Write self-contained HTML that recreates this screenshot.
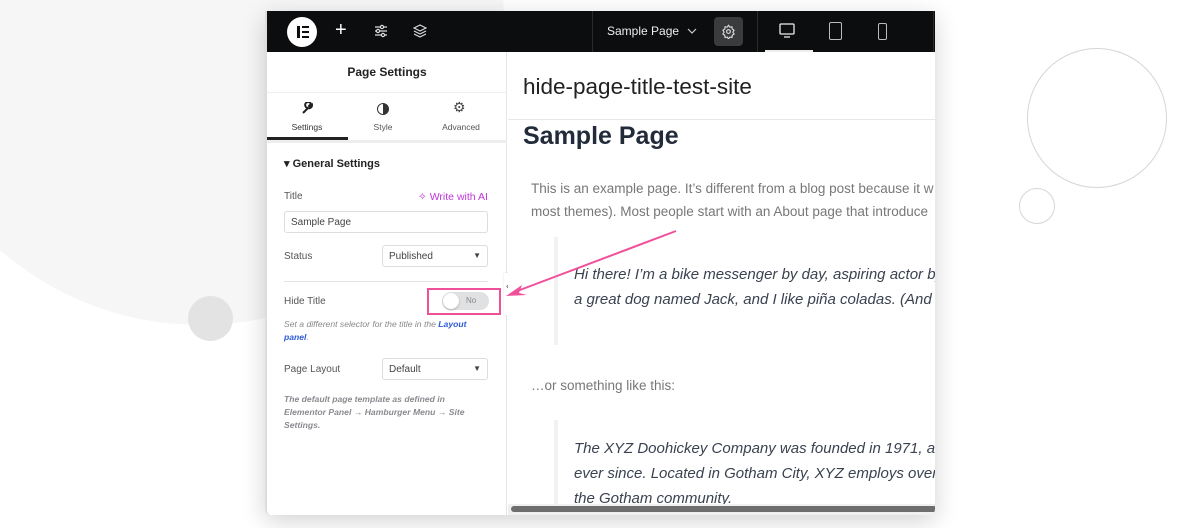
<!DOCTYPE html>
<html><head><meta charset="utf-8"><style>
*{box-sizing:border-box;margin:0;padding:0}
body{width:1200px;height:528px;overflow:hidden;background:#fff;font-family:"Liberation Sans",sans-serif;position:relative}
.abs{position:absolute}
.win{left:265px;top:11px;width:670px;height:504px;background:#fff;border-radius:0 0 6px 6px;overflow:hidden;box-shadow:0 6px 24px rgba(0,0,0,.18);border-left:2px solid #ddd}
.top{left:0;top:0;width:670px;height:41px;background:#0c0d0e}
.panel{left:0;top:41px;width:240px;height:463px;background:#fff;border-right:1px solid #e6e6e6}
.lbl{font-size:10px;color:#555}
.inp{border:1px solid #ddd;border-radius:3px;height:22px;font-size:10px;color:#444;padding:5px 6px}
.ital{font-size:8.6px;font-style:italic;color:#888;line-height:13px}
.prev{left:241px;top:41px;width:429px;height:463px;background:#fff}
.p{font-size:13.5px;color:#777;line-height:23px;white-space:nowrap}
.q{font-size:15px;font-style:italic;color:#3a4250;line-height:25px;white-space:nowrap}
</style></head><body>
<div class="abs" style="left:-104px;top:21px;width:608px;height:608px;margin-top:-304px;border-radius:50%;background:#f6f6f6"></div>
<div class="abs" style="left:188px;top:296px;width:45px;height:45px;border-radius:50%;background:#e3e3e3"></div>
<div class="abs" style="left:1027px;top:48px;width:140px;height:140px;border-radius:50%;border:1px solid #d6d6d6"></div>
<div class="abs" style="left:1019px;top:188px;width:36px;height:36px;border-radius:50%;border:1px solid #d6d6d6"></div>

<div class="abs win">
 <div class="abs top">
  <div class="abs" style="left:20px;top:6px;width:30px;height:30px;border-radius:50%;background:#fff"></div>
  <div class="abs" style="left:30px;top:15px;width:3px;height:12px;background:#0c0d0e"></div>
  <div class="abs" style="left:35px;top:15px;width:7px;height:2px;background:#0c0d0e;box-shadow:0 5px 0 #0c0d0e,0 10px 0 #0c0d0e"></div>
  <div class="abs" style="left:68px;top:8px;color:#fff;font-size:20px;font-weight:300">+</div>
  <svg class="abs" style="left:107px;top:13px" width="14" height="14" viewBox="0 0 14 14" fill="none" stroke="#ddd" stroke-width="1.2"><path d="M1 3h12M1 7h12M1 11h12"/><circle cx="8" cy="3" r="1.6" fill="#0c0d0e"/><circle cx="4" cy="7" r="1.6" fill="#0c0d0e"/><circle cx="9" cy="11" r="1.6" fill="#0c0d0e"/></svg>
  <svg class="abs" style="left:146px;top:13px" width="14" height="14" viewBox="0 0 14 14" fill="none" stroke="#ddd" stroke-width="1.2"><path d="M7 1L13 4 7 7 1 4z M1 7l6 3 6-3 M1 10l6 3 6-3"/></svg>
  <div class="abs" style="left:325px;top:0;width:1px;height:41px;background:#2a2a2a"></div>
  <div class="abs" style="left:340px;top:13px;color:#eee;font-size:12px">Sample Page</div>
  <svg class="abs" style="left:420px;top:17px" width="10" height="7" viewBox="0 0 10 7" fill="none" stroke="#ccc" stroke-width="1.2"><path d="M1 1l4 4 4-4"/></svg>
  <div class="abs" style="left:447px;top:6px;width:29px;height:29px;border-radius:4px;background:#3a3b3d"></div>
  <svg class="abs" style="left:454px;top:13px" width="15" height="15" viewBox="0 0 24 24" fill="none" stroke="#ddd" stroke-width="1.8"><circle cx="12" cy="12" r="3"/><path d="M12 2l2 3 3.5-.5.5 3.5 3 2-2 3 2 3-3 2-.5 3.5-3.5-.5-2 3-2-3-3.5.5-.5-3.5-3-2 2-3-2-3 3-2 .5-3.5 3.5.5z"/></svg>
  <div class="abs" style="left:490px;top:0;width:1px;height:41px;background:#2a2a2a"></div>
  <svg class="abs" style="left:512px;top:12px" width="16" height="16" viewBox="0 0 16 16" fill="none" stroke="#eee" stroke-width="1.3"><rect x="1" y="1" width="14" height="10" rx="1"/><path d="M5 14h6"/></svg>
  <div class="abs" style="left:498px;top:39px;width:48px;height:2px;background:#eee"></div>
  <div class="abs" style="left:562px;top:11px;width:13px;height:18px;border:1.3px solid #bbb;border-radius:2px"></div>
  <div class="abs" style="left:611px;top:12px;width:9px;height:17px;border:1.3px solid #bbb;border-radius:2px"></div>
  <div class="abs" style="left:666px;top:0;width:1px;height:41px;background:#2a2a2a"></div>
 </div>
 <div class="abs panel">
  <div class="abs" style="left:0;top:13px;width:240px;text-align:center;font-size:12px;font-weight:bold;color:#222">Page Settings</div>
  <div class="abs" style="left:0;top:40px;width:240px;height:1px;background:#eee"></div>
  <svg class="abs" style="left:35px;top:50px" width="12" height="12" viewBox="0 0 12 12"><path d="M1 11l5-5M6 6a3 3 0 1 1 3 -4l-2 2 1 1 2-2a3 3 0 0 1-4 3" stroke="#222" stroke-width="2" fill="none"/></svg>
  <div class="abs" style="left:0;top:70px;width:80px;text-align:center;font-size:8.5px;color:#333">Settings</div>
  <div class="abs" style="left:0;top:85px;width:81px;height:3px;background:#222"></div>
  <div class="abs" style="left:110px;top:51px;width:12px;height:12px;border-radius:50%;border:1.5px solid #333;background:linear-gradient(90deg,#fff 50%,#333 50%)"></div>
  <div class="abs" style="left:80px;top:70px;width:72px;text-align:center;font-size:8.5px;color:#555">Style</div>
  <div class="abs" style="left:186px;top:47px;font-size:14px;color:#444">⚙</div>
  <div class="abs" style="left:155px;top:70px;width:78px;text-align:center;font-size:8.5px;color:#555">Advanced</div>
  <div class="abs" style="left:0;top:88px;width:240px;height:3px;background:#eee"></div>
  <div class="abs" style="left:17px;top:105px;font-size:11px;font-weight:bold;color:#222">▾ General Settings</div>
  <div class="abs lbl" style="left:17px;top:150px;top:150px"></div>
  <div class="abs lbl" style="left:17px;top:150px;display:none"></div>
  <div class="abs lbl" style="left:17px;top:150px;visibility:hidden"></div>
  <div class="abs lbl" style="left:17px;top:150px;top:150px;visibility:hidden"></div>
  <div class="abs lbl" style="left:17px;top:150px;visibility:hidden"></div>
  <div class="abs lbl" style="left:17px;top:150px;visibility:hidden"></div>
  <div class="abs lbl" style="left:17px;top:150px;visibility:hidden"></div>
  <div class="abs lbl" style="left:17px;top:150px;visibility:hidden"></div>
  <div class="abs lbl" style="left:17px;top:150px;visibility:hidden"></div>
  <div class="abs lbl" style="left:17px;top:139px">Title</div>
  <div class="abs" style="left:151px;top:139px;font-size:10.5px;color:#c036d8">✧ Write with AI</div>
  <div class="abs inp" style="left:17px;top:159px;width:204px">Sample Page</div>
  <div class="abs lbl" style="left:17px;top:199px">Status</div>
  <div class="abs inp" style="left:115px;top:193px;width:106px">Published<span style="float:right;font-size:8px">▼</span></div>
  <div class="abs" style="left:17px;top:229px;width:204px;height:1px;background:#e4e4e4"></div>
  <div class="abs lbl" style="left:17px;top:244px">Hide Title</div>
  <div class="abs" style="left:160px;top:236px;width:74px;height:27px;border:2px solid #f0509a"></div>
  <div class="abs" style="left:175px;top:240px;width:47px;height:18px;border-radius:9px;background:#e0e1e3"></div>
  <div class="abs" style="left:176px;top:241px;width:16px;height:16px;border-radius:50%;background:#fff;box-shadow:0 1px 2px rgba(0,0,0,.25)"></div>
  <div class="abs" style="left:199px;top:244px;font-size:8px;color:#888">No</div>
  <div class="abs ital" style="left:17px;top:266px;width:200px">Set a different selector for the title in the <b style="color:#2c5bd8">Layout panel</b>.</div>
  <div class="abs lbl" style="left:17px;top:312px">Page Layout</div>
  <div class="abs inp" style="left:115px;top:306px;width:106px">Default<span style="float:right;font-size:8px">▼</span></div>
  <div class="abs ital" style="left:17px;top:341px;width:196px;font-weight:bold;color:#8a8a90">The default page template as defined in Elementor Panel → Hamburger Menu → Site Settings.</div>
 </div>
 <div class="abs" style="left:237px;top:262px;width:14px;height:42px;background:#fff;box-shadow:0 0 2px rgba(0,0,0,.12);font-size:10px;color:#555;padding:8px 2px">‹</div>
 <div class="abs prev">
  <div class="abs" style="left:15px;top:22px;font-size:22.5px;color:#222">hide-page-title-test-site</div>
  <div class="abs" style="left:0;top:67px;width:429px;height:1px;background:#e8e8e8"></div>
  <div class="abs" style="left:15px;top:70px;font-size:25px;font-weight:bold;color:#222b3a">Sample Page</div>
  <div class="abs p" style="left:23px;top:125px">This is an example page. It’s different from a blog post because it w<br>most themes). Most people start with an About page that introduce</div>
  <div class="abs" style="left:46px;top:185px;width:4px;height:108px;background:#f2f2f2"></div>
  <div class="abs q" style="left:66px;top:210px">Hi there! I’m a bike messenger by day, aspiring actor by n<br>a great dog named Jack, and I like piña coladas. (And ge</div>
  <div class="abs p" style="left:23px;top:322px">…or something like this:</div>
  <div class="abs" style="left:46px;top:368px;width:4px;height:95px;background:#f2f2f2"></div>
  <div class="abs q" style="left:66px;top:384px">The XYZ Doohickey Company was founded in 1971, and<br>ever since. Located in Gotham City, XYZ employs over 2,<br>the Gotham community.</div>
  <div class="abs" style="left:0;top:452px;width:429px;height:11px;background:#f0f0f0"></div>
  <div class="abs" style="left:3px;top:454px;width:426px;height:6px;border-radius:3px;background:#6e6e6e"></div>
 </div>
</div>
<svg class="abs" style="left:500px;top:225px" width="185" height="75" viewBox="0 0 185 75"><path d="M176 6L12 68" stroke="#f0509a" stroke-width="2"/><path d="M6 71l16-11-3 8 8 2z" fill="#f0509a"/></svg>
</body></html>
